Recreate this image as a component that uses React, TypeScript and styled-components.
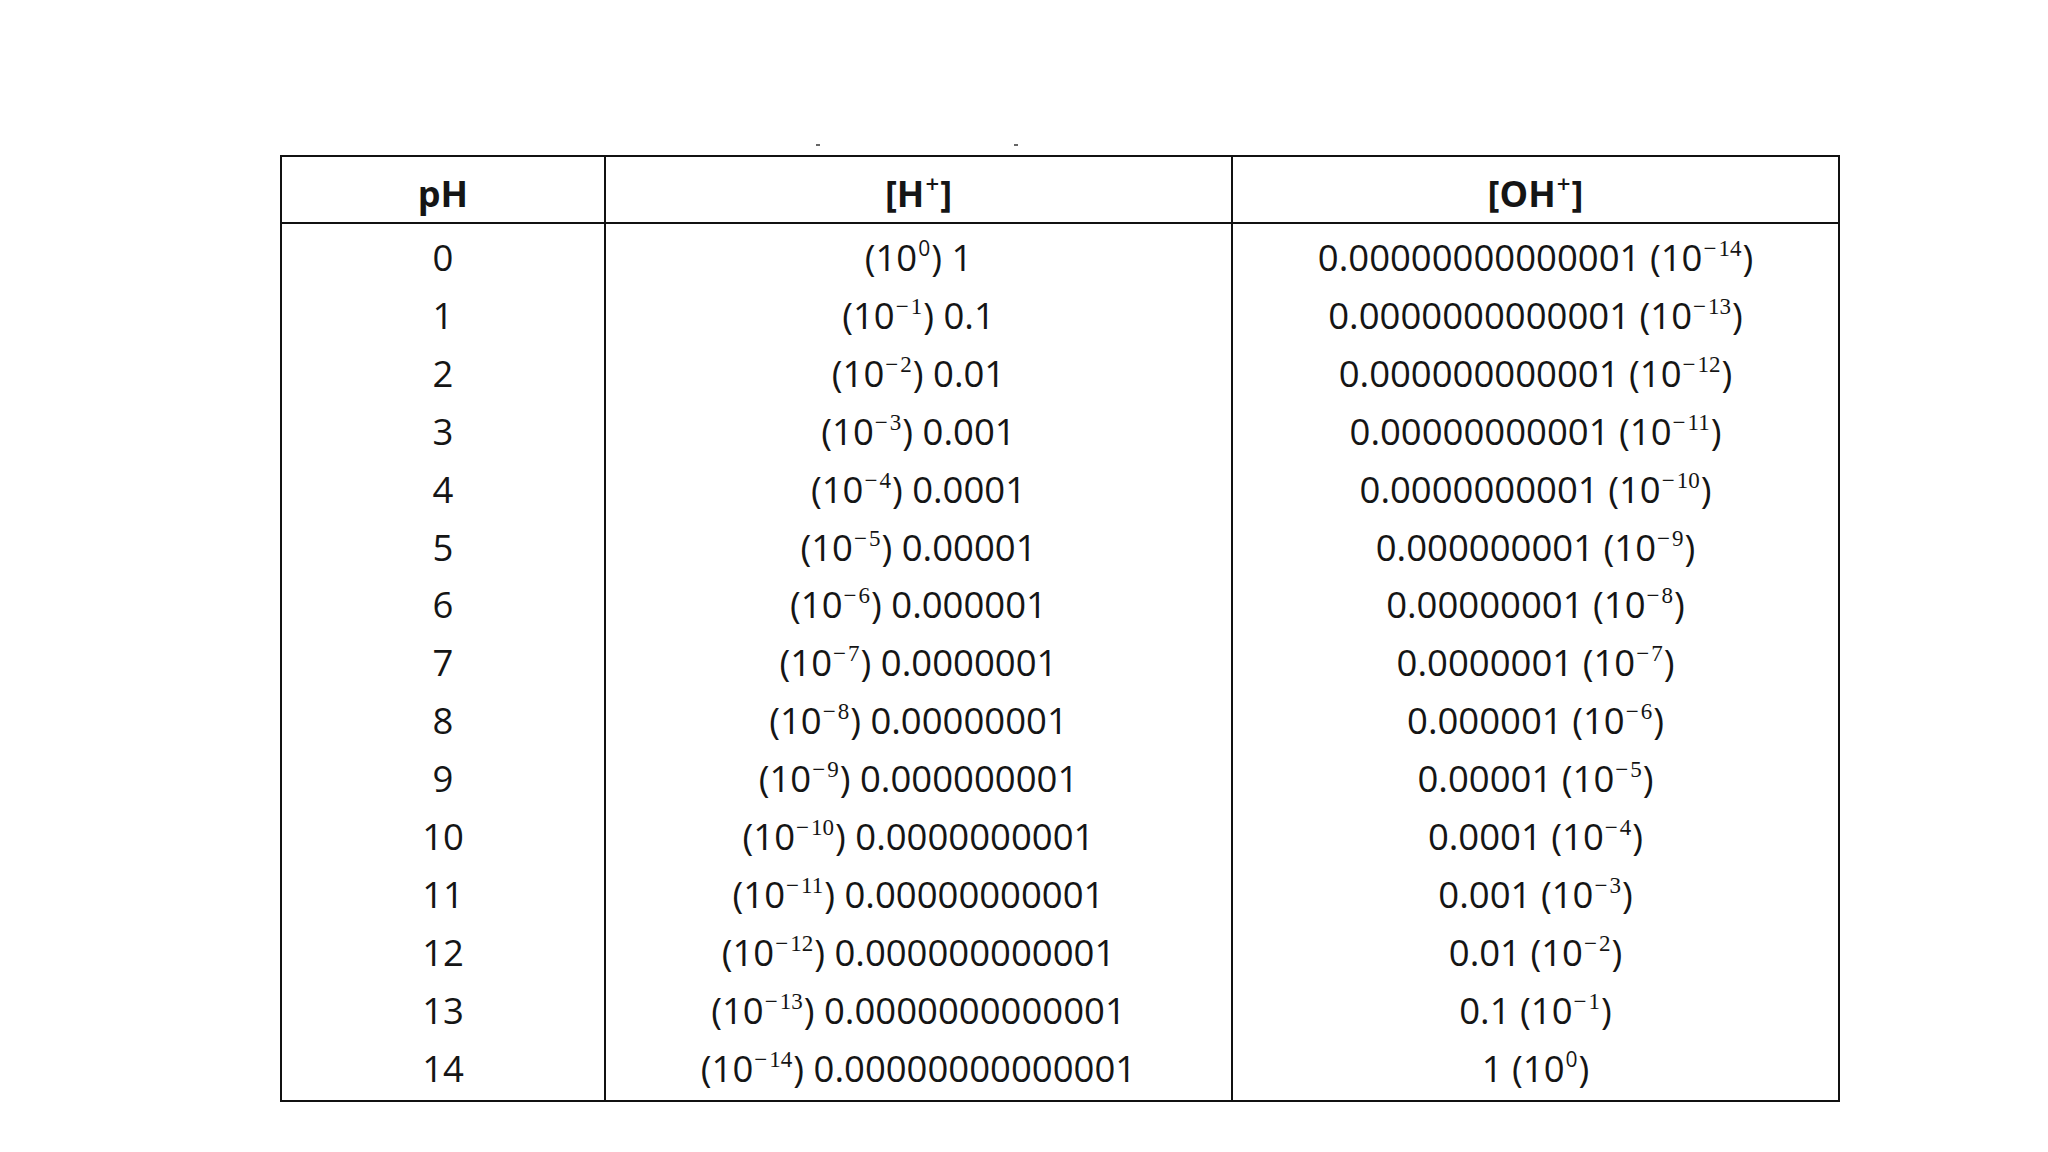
import styled, { createGlobalStyle } from "styled-components";

const GlobalStyle = createGlobalStyle`
  html, body {
    margin: 0;
    padding: 0;
    background: #ffffff;
  }
`;

const Page = styled.div`
  width: 2048px;
  height: 1152px;
  padding: 140px 0 0 280px;
  box-sizing: border-box;
  font-family: "Open Sans", "Noto Sans", sans-serif;
  color: #151515;
`;

const Marks = styled.div`
  display: flex;
  gap: 194px;
  height: 15px;
  padding-left: 536px;
  align-items: flex-start;
  padding-top: 4px;
  box-sizing: border-box;
`;

const Mark = styled.span`
  width: 4px;
  height: 2px;
  background: #666;
`;

const Table = styled.table`
  border-collapse: collapse;
  table-layout: fixed;
`;

const Col = styled.col<{ $w: number }>`
  width: ${(p) => p.$w}px;
`;

const HeadCell = styled.th`
  border: 2px solid #111;
  height: 67px;
  padding: 9px 0 0;
  box-sizing: border-box;
  font-weight: 700;
  font-size: 36px;
  line-height: 54px;
  text-align: center;
  vertical-align: middle;
`;

const Cell = styled.td<{ $first?: boolean; $last?: boolean }>`
  border-left: 2px solid #111;
  border-right: 2px solid #111;
  border-bottom: ${(p) => (p.$last ? "2px solid #111" : "none")};
  padding: ${(p) => (p.$first ? "5px" : "0")} 0 ${(p) => (p.$last ? "2px" : "0")};
  height: 57.9px;
  font-size: 36.5px;
  line-height: 57.9px;
  text-align: center;
  white-space: nowrap;
`;

const Sup = styled.sup<{ $serif?: boolean }>`
  font-family: ${(p) =>
    p.$serif ? '"Liberation Serif", "DejaVu Serif", serif' : '"Open Sans", sans-serif'};
  font-size: ${(p) => (p.$serif ? "23px" : "21px")};
  line-height: 0;
  vertical-align: 15px;
  margin: 0 1px;
`;

const Minus = styled.span`
  margin-right: 2px;
`;

const HeadSup = styled.sup`
  font-size: 24px;
  line-height: 0;
  vertical-align: 14px;
  font-weight: 600;
  margin: 0 1px;
`;

const decimal = (n: number) => (n === 0 ? "1" : "0." + "0".repeat(n - 1) + "1");

const Exp = ({ n }: { n: number }) =>
  n === 0 ? (
    <Sup>0</Sup>
  ) : (
    <Sup $serif>
      <Minus>{"\u2212"}</Minus>
      {n}
    </Sup>
  );

const rows = Array.from({ length: 15 }, (_, i) => i);

const App = () => (
  <Page>
    <GlobalStyle />
    <Marks>
      <Mark />
      <Mark />
    </Marks>
    <Table>
      <colgroup>
        <Col $w={324} />
        <Col $w={627} />
        <Col $w={607} />
      </colgroup>
      <thead>
        <tr>
          <HeadCell>pH</HeadCell>
          <HeadCell>
            [H<HeadSup>+</HeadSup>]
          </HeadCell>
          <HeadCell>
            [OH<HeadSup>+</HeadSup>]
          </HeadCell>
        </tr>
      </thead>
      <tbody>
        {rows.map((n) => {
          const first = n === 0;
          const last = n === rows.length - 1;
          return (
            <tr key={n}>
              <Cell $first={first} $last={last}>
                {n}
              </Cell>
              <Cell $first={first} $last={last}>
                (10
                <Exp n={n} />) {decimal(n)}
              </Cell>
              <Cell $first={first} $last={last}>
                {decimal(14 - n)} (10
                <Exp n={14 - n} />)
              </Cell>
            </tr>
          );
        })}
      </tbody>
    </Table>
  </Page>
);

export default App;
